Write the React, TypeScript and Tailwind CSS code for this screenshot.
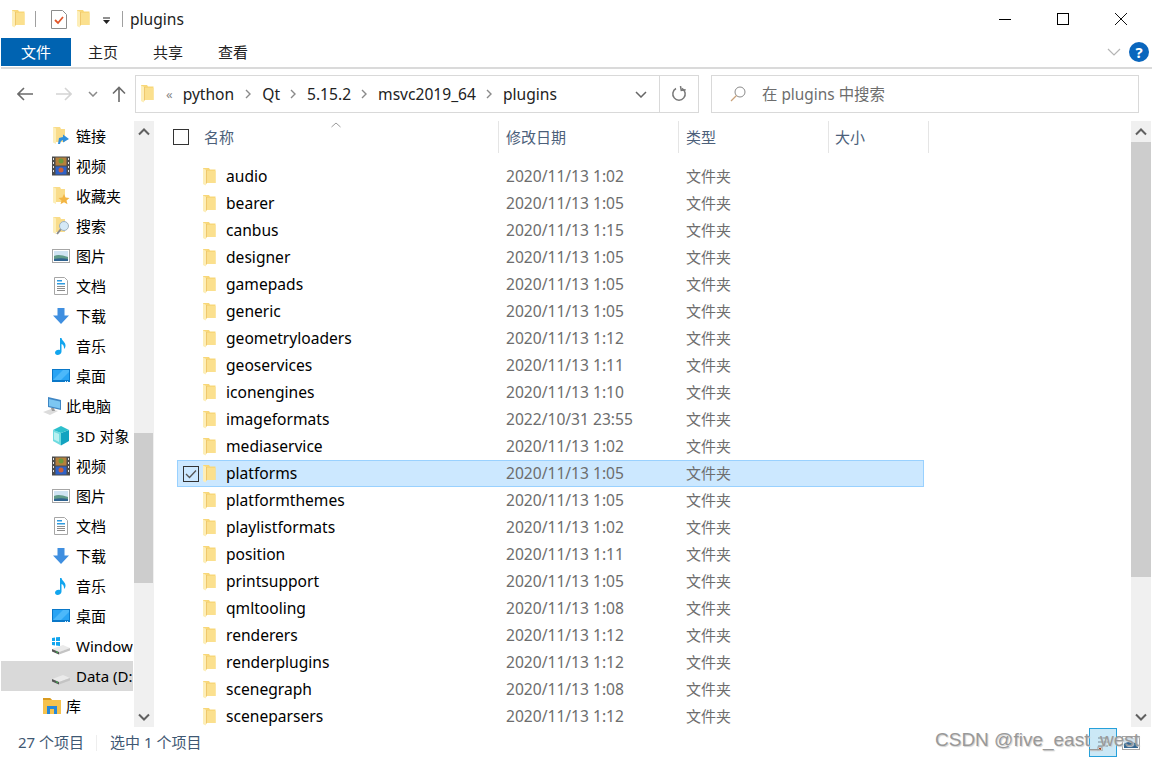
import React from "react";

const folders = [
  ["audio", "2020/11/13 1:02"],
  ["bearer", "2020/11/13 1:05"],
  ["canbus", "2020/11/13 1:15"],
  ["designer", "2020/11/13 1:05"],
  ["gamepads", "2020/11/13 1:05"],
  ["generic", "2020/11/13 1:05"],
  ["geometryloaders", "2020/11/13 1:12"],
  ["geoservices", "2020/11/13 1:11"],
  ["iconengines", "2020/11/13 1:10"],
  ["imageformats", "2022/10/31 23:55"],
  ["mediaservice", "2020/11/13 1:02"],
  ["platforms", "2020/11/13 1:05"],
  ["platformthemes", "2020/11/13 1:05"],
  ["playlistformats", "2020/11/13 1:02"],
  ["position", "2020/11/13 1:11"],
  ["printsupport", "2020/11/13 1:05"],
  ["qmltooling", "2020/11/13 1:08"],
  ["renderers", "2020/11/13 1:12"],
  ["renderplugins", "2020/11/13 1:12"],
  ["scenegraph", "2020/11/13 1:08"],
  ["sceneparsers", "2020/11/13 1:12"],
];

const FolderIcon = ({ className = "" }: { className?: string }) => (
  <svg width="13" height="18" viewBox="0 0 13 18" className={`shrink-0 ${className}`}>
    <path d="M0 0h6l1 1.500h5.500V15H0z" fill="#f8d779" />
    <path d="M4 3h8.500v12H4z" fill="#fbe08e" />
    <path d="M0 .5L3.500 2v13.500L2.500 17.500 0 16z" fill="#fdeeb8" />
    <path d="M3.500 2v13.500" stroke="#ecc262" strokeWidth="0.800" />
  </svg>
);

const SideFolder = ({ badge }: { badge: React.ReactNode }) => (
  <svg width="20" height="20" viewBox="0 0 20 20">
    <path d="M2 1h7l1 2h4v13H2z" fill="#f9dc8a" />
    <path d="M2 1l3 1.500V18l-3-1.500z" fill="#fdeeb8" />
    {badge}
  </svg>
);

const LinkIcon = () => (
  <SideFolder badge={<path d="M7 18l1-6 4-1V8.500l6 4.500-6 3.500V14l-2 1-1 3z" fill="#2f8fdc" />} />
);
const StarIcon = () => (
  <SideFolder badge={<path d="M13 8l1.600 3.600 3.900.4-3 2.500 1 3.800-3.500-2-3.500 2 1-3.800-3-2.500 3.900-.4z" fill="#f2b544" />} />
);
const SearchFolderIcon = () => (
  <SideFolder
    badge={
      <g>
        <path d="M10 13l-4 5" stroke="#8a8a8a" strokeWidth="2" />
        <circle cx="13" cy="10" r="4.500" fill="#d5e9f7" stroke="#9fb2c0" />
      </g>
    }
  />
);

const VideoIcon = () => (
  <svg width="18" height="20" viewBox="0 0 18 20">
    <rect width="18" height="19" y="0.500" fill="#4b4b4b" />
    <rect x="3.500" y="1.500" width="11" height="8" fill="#b5803c" />
    <rect x="3.500" y="10.500" width="11" height="8" fill="#2f62c8" />
    <circle cx="9" cy="5" r="2.500" fill="#6a9a3c" />
    <circle cx="9" cy="14" r="2.500" fill="#c9603c" />
    <path d="M1 2h1v2H1zM1 6h1v2H1zM1 10h1v2H1zM1 14h1v2H1zM16 2h1v2h-1zM16 6h1v2h-1zM16 10h1v2h-1zM16 14h1v2h-1z" fill="#e6e6e6" />
  </svg>
);
const PictureIcon = () => (
  <svg width="18" height="14" viewBox="0 0 18 14">
    <rect x="0.500" y="0.500" width="17" height="13" fill="#fff" stroke="#a6a6a6" />
    <rect x="2" y="2" width="14" height="10" fill="#cfe3f2" />
    <path d="M2 7c4-2 8-1 14 1v4H2z" fill="#5f9a88" />
    <path d="M2 10c5-1 9-1 14 0v2H2z" fill="#2f6390" />
  </svg>
);
const DocIcon = () => (
  <svg width="14" height="18" viewBox="0 0 14 18">
    <path d="M.5.5h10l3 3v14H.5z" fill="#fff" stroke="#a6a6a6" />
    <path d="M3 3h5v1.500H3zM3 6h8v1.500H3z" fill="#2f9be0" />
    <path d="M3 9h8v1H3zM3 11h8v1H3zM3 13h8v1H3z" fill="#8c8c8c" />
  </svg>
);
const DownloadIcon = () => (
  <svg width="18" height="18" viewBox="0 0 18 18">
    <path d="M5.500 1h7v7.500H17L9 17 1 8.500h4.500z" fill="#3f8fe0" />
  </svg>
);
const MusicIcon = () => (
  <svg width="14" height="18" viewBox="0 0 14 18">
    <path d="M6 1h1.500c.5 3 4 4 4 7.500 0 1.500-.5 2.500-1.500 3.500.3-3-1-4.500-2.500-5v7.500C7.500 16.500 5.500 18 3.500 18 2 18 1 17 1 15.800 1 14 3 12.800 4.500 12.800c.6 0 1.100.1 1.500.3z" fill="#12a5ee" />
  </svg>
);
const DesktopIcon = () => (
  <svg width="18" height="14" viewBox="0 0 18 14">
    <rect width="18" height="13" fill="#0a78c8" />
    <rect x="1" y="1" width="16" height="10" fill="#29a4f4" />
    <path d="M1 11L11 1h6v2L9 11z" fill="#4cb8fa" />
    <path d="M13 12h1v1h-1zM15 12h1v1h-1z" fill="#d8eefc" />
  </svg>
);
const PcIcon = () => (
  <svg width="20" height="20" viewBox="0 0 20 20">
    <path d="M6 1l13 3v10L6 11z" fill="#3f86c4" />
    <path d="M7 3l11 2.500v7L7 10z" fill="#7cc6f2" />
    <path d="M1 16l8-3 7 2-8 4z" fill="#dcdcdc" />
    <path d="M9 12h3l1 3-3 0z" fill="#9a9a9a" />
  </svg>
);
const CubeIcon = () => (
  <svg width="18" height="20" viewBox="0 0 18 20">
    <path d="M9 7l8-3v11l-8 4.500z" fill="#12a3c0" />
    <path d="M9 7L1 4v11l8 4.500z" fill="#6fdbe0" />
    <path d="M9 0l8 4-8 3-8-3z" fill="#2dbfcc" />
    <path d="M2 6l5 2v8l-5-2.500z" fill="#b8f0f0" />
  </svg>
);
const DriveIcon = ({ win = false }: { win?: boolean }) => (
  <svg width="20" height="18" viewBox="0 0 20 18">
    {win && <path d="M1 1l3-.5v3.500H1zM5 .3L9 0v4H5zM1 5h3v3.500L1 8zM5 5h4v4l-4-.5z" fill="#12a5ee" />}
    <path d="M1 12l11-4 7 3-11 4z" fill="#eaeaea" />
    <path d="M1 12l7 3v2.500l-7-3z" fill="#555" />
    <path d="M8 15l11-4v2.500l-11 4z" fill="#c4c4c4" />
    <path d="M5 14.300l2 .8v1l-2-.8z" fill="#3fbf4f" />
  </svg>
);
const LibraryIcon = () => (
  <svg width="18" height="16" viewBox="0 0 18 16">
    <path d="M0 0h7l2 2h9v14H0z" fill="#f6c24d" />
    <path d="M0 0h7l2 2H0z" fill="#d99a1f" />
    <path d="M4 8h10v8h-3v-5H7v5H4z" fill="#2788d8" />
  </svg>
);

const sideItems: [string, React.ReactNode, boolean?][] = [
  ["链接", <LinkIcon />],
  ["视频", <VideoIcon />],
  ["收藏夹", <StarIcon />],
  ["搜索", <SearchFolderIcon />],
  ["图片", <PictureIcon />],
  ["文档", <DocIcon />],
  ["下载", <DownloadIcon />],
  ["音乐", <MusicIcon />],
  ["桌面", <DesktopIcon />],
  ["此电脑", <PcIcon />, true],
  ["3D 对象", <CubeIcon />],
  ["视频", <VideoIcon />],
  ["图片", <PictureIcon />],
  ["文档", <DocIcon />],
  ["下载", <DownloadIcon />],
  ["音乐", <MusicIcon />],
  ["桌面", <DesktopIcon />],
  ["Window", <DriveIcon win />],
  ["Data (D:", <DriveIcon />],
  ["库", <LibraryIcon />, true],
  ["", <PcIcon />, true],
];

const Crumb = ({ label, first = false }: { label: string; first?: boolean }) => (
  <>
    <span className="pt-[2px]">{label}</span>
    <svg width="6" height="10" viewBox="0 0 6 10" className={first ? "ml-[11px] mr-[11px]" : "ml-[10px] mr-[11px]"}>
      <path d="M1 1l4 4-4 4" fill="none" stroke="#8a8a8a" strokeWidth="1.400" />
    </svg>
  </>
);

const ScrollUp = () => (
  <svg width="12" height="8" viewBox="0 0 12 8">
    <path d="M1 6.500l5-5 5 5" fill="none" stroke="#606060" strokeWidth="2" />
  </svg>
);
const ScrollDown = () => (
  <svg width="12" height="8" viewBox="0 0 12 8">
    <path d="M1 1.500l5 5 5-5" fill="none" stroke="#606060" strokeWidth="2" />
  </svg>
);

const FONT = "font-['Noto_Sans','Noto_Sans_CJK_SC',sans-serif]";

export default function App() {
  return (
    <div className={`${FONT} relative flex h-[758px] w-[1152px] flex-col overflow-hidden bg-white text-[15px] text-[#111]`}>
      {/* title bar */}
      <div className="flex h-[38px] shrink-0 items-center pl-3">
        <FolderIcon />
        <div className="ml-[10px] h-[16px] w-px bg-[#a0a0a0]" />
        <svg width="16" height="19" viewBox="0 0 16 19" className="ml-[15px]">
          <path d="M.5.5h11l4 4v14H.5z" fill="#fff" stroke="#8c8c8c" />
          <path d="M4 10l3 3 5-6" fill="none" stroke="#e2562a" strokeWidth="1.800" />
        </svg>
        <FolderIcon className="ml-[10px]" />
        <svg width="10" height="8" viewBox="0 0 10 8" className="ml-[12px] mt-[3px]">
          <path d="M1 .5h7v1H1zM1 3h7L4.500 7z" fill="#222" />
        </svg>
        <div className="ml-[10px] h-[16px] w-px bg-[#a0a0a0]" />
        <span className="ml-[7px] pt-[2px] text-[15.6px] text-[#222]">plugins</span>
        <div className="ml-auto flex items-center pr-[24px]">
          <div className="h-px w-[12px] bg-black" />
          <div className="ml-[46px] h-[12px] w-[12px] border border-black" />
          <svg width="14" height="14" viewBox="0 0 14 14" className="ml-[45px]">
            <path d="M1 1l12 12M13 1L1 13" stroke="#111" strokeWidth="1" />
          </svg>
        </div>
      </div>

      {/* ribbon */}
      <div className="ml-px flex h-[31px] shrink-0 items-start border-b-2 border-[#dadada] pr-[3px]">
        <div className="flex h-[28px] w-[70px] items-center justify-center bg-[#0063b1] text-white">文件</div>
        <span className="ml-[17px] flex h-[28px] items-center text-[#222]">主页</span>
        <span className="ml-[35px] flex h-[28px] items-center text-[#222]">共享</span>
        <span className="ml-[35px] flex h-[28px] items-center text-[#222]">查看</span>
        <div className="ml-auto flex h-[28px] items-center gap-[8px]">
          <svg width="14" height="8" viewBox="0 0 14 8">
            <path d="M1 1l6 6 6-6" fill="none" stroke="#b5b5b5" strokeWidth="1.200" />
          </svg>
          <div className="flex h-[20px] w-[20px] items-center justify-center rounded-full bg-[#0a66bd] text-[15px] font-bold text-white">?</div>
        </div>
      </div>

      {/* nav row */}
      <div className="flex h-[52px] shrink-0 items-center pb-[2px] pl-[17px]">
        <svg width="16" height="14" viewBox="0 0 16 14">
          <path d="M16 7H1.500M7 1L1 7l6 6" fill="none" stroke="#6b6b6b" strokeWidth="1.600" />
        </svg>
        <svg width="16" height="14" viewBox="0 0 16 14" className="ml-[23px]">
          <path d="M0 7h14.500M9 1l6 6-6 6" fill="none" stroke="#d4d4d4" strokeWidth="1.600" />
        </svg>
        <svg width="10" height="6" viewBox="0 0 10 6" className="ml-[16px]">
          <path d="M1 1l4 4 4-4" fill="none" stroke="#8a8a8a" strokeWidth="1.500" />
        </svg>
        <svg width="14" height="16" viewBox="0 0 14 16" className="ml-[14px]">
          <path d="M7 16V1.500M1 7.500l6-6 6 6" fill="none" stroke="#6b6b6b" strokeWidth="1.600" />
        </svg>

        <div className="ml-[9px] flex h-[38px] w-[564px] items-center border border-[#d9d9d9]">
          <FolderIcon className="ml-[5px]" />
          <span className="ml-[12px] text-[13px] leading-none text-[#888]">«</span>
          <div className="ml-[10px] flex flex-1 items-center text-[15.6px] text-[#222]">
            <Crumb label="python" first />
            <Crumb label="Qt" />
            <Crumb label="5.15.2" />
            <Crumb label="msvc2019_64" />
            <span className="pt-[2px]">plugins</span>
          </div>
          <svg width="12" height="7" viewBox="0 0 12 7" className="mr-[12px]">
            <path d="M1 1l5 5 5-5" fill="none" stroke="#666" strokeWidth="1.500" />
          </svg>
          <div className="flex h-full w-[39px] items-center justify-center border-l border-[#d9d9d9]">
            <svg width="16" height="16" viewBox="0 0 16 16">
              <path d="M11 2.500a6.200 6.200 0 1 1-6 0" fill="none" stroke="#777" strokeWidth="1.500" />
              <path d="M10 0v4.500h4.500" fill="none" stroke="#777" strokeWidth="1.500" transform="rotate(-10 10 3)" />
            </svg>
          </div>
        </div>

        <div className="ml-[12px] flex h-[38px] w-[428px] items-center border border-[#d9d9d9] text-[#6d6d6d]">
          <svg width="16" height="16" viewBox="0 0 16 16" className="ml-[18px]">
            <circle cx="10" cy="6" r="5" fill="none" stroke="#8a8a8a" />
            <path d="M6.500 9.500L1 15" stroke="#c9a27a" strokeWidth="1.300" />
          </svg>
          <span className="ml-[16px] pt-[2px] text-[15.4px]">在 plugins 中搜索</span>
        </div>
      </div>

      {/* main */}
      <div className="flex h-[606px] shrink-0 items-stretch">
        {/* sidebar */}
        <div className="h-full w-[134px] overflow-hidden pl-px pr-px">
          {sideItems.map(([label, icon, top], i) => (
            <div
              key={i}
              className={`flex h-[30px] items-center overflow-hidden whitespace-nowrap ${label === "Data (D:" ? "bg-[#d9d9d9]" : ""}`}
            >
              <div className={`flex w-[20px] shrink-0 items-center justify-center ${top ? "ml-[41px]" : "ml-[50px]"}`}>{icon}</div>
              <span className={`${top ? "ml-[4px]" : "ml-[5px]"} text-black`}>{label}</span>
            </div>
          ))}
        </div>
        {/* sidebar scrollbar */}
        <div className="flex h-full w-[20px] flex-col bg-[#f0f0f0]">
          <div className="flex h-[21px] shrink-0 items-center justify-center"><ScrollUp /></div>
          <div className="mt-[291px] h-[150px] w-[19px] shrink-0 bg-[#cdcdcd]" />
          <div className="mt-auto flex h-[21px] shrink-0 items-center justify-center"><ScrollDown /></div>
        </div>

        {/* file list */}
        <div className="relative flex h-full flex-1 flex-col pl-[7px]">
          <div className="flex h-[32px] shrink-0 items-center text-[#4c607a]">
            <div className="relative flex h-full w-[338px] items-center border-r border-[#e5e5e5] pl-[12px]">
              <div className="h-[16px] w-[16px] border border-[#333]" />
              <span className="ml-[15px]">名称</span>
              <svg width="10" height="6" viewBox="0 0 10 6" className="absolute left-[170px] top-[1px]">
                <path d="M.5 5L5 1l4.500 4" fill="none" stroke="#9a9a9a" />
              </svg>
            </div>
            <div className="flex h-full w-[180px] items-center border-r border-[#e5e5e5] pl-[7px]">修改日期</div>
            <div className="flex h-full w-[150px] items-center border-r border-[#e5e5e5] pl-[7px]">类型</div>
            <div className="flex h-full w-[100px] items-center border-r border-[#e5e5e5] pl-[6px]">大小</div>
          </div>

          <div className="mt-[10px] w-[763px] shrink-0 pl-[16px]">
            {folders.map(([name, date]) => {
              const sel = name === "platforms";
              return (
                <div
                  key={name}
                  className={`flex h-[27px] items-center border ${sel ? "border-[#99d1ff] bg-[#cce8ff]" : "border-transparent"}`}
                >
                  <div className="flex w-[48px] shrink-0 items-center pl-[5px]">
                    <div className="flex h-[16px] w-[16px] shrink-0 items-center justify-center">
                      {sel && (
                        <div className="flex h-[16px] w-[16px] items-center justify-center border border-[#333]">
                          <svg width="12" height="10" viewBox="0 0 12 10">
                            <path d="M1 5l3.500 3.500L11 1.500" fill="none" stroke="#555" strokeWidth="1.300" />
                          </svg>
                        </div>
                      )}
                    </div>
                    <FolderIcon className="ml-[4px]" />
                  </div>
                  <div className="w-[280px] text-[15.6px] text-black">{name}</div>
                  <div className="w-[180px] text-[15.6px] text-[#6d6d6d]">{date}</div>
                  <div className="text-[#6d6d6d]">文件夹</div>
                </div>
              );
            })}
          </div>
        </div>

        {/* right scrollbar */}
        <div className="mr-px flex h-full w-[20px] flex-col bg-[#f0f0f0]">
          <div className="flex h-[21px] shrink-0 items-center justify-center"><ScrollUp /></div>
          <div className="h-[435px] w-full shrink-0 bg-[#cdcdcd]" />
          <div className="mt-auto flex h-[21px] shrink-0 items-center justify-center"><ScrollDown /></div>
        </div>
      </div>

      {/* status bar */}
      <div className="flex flex-1 items-center pl-[18px] text-[#3f5873]">
        <span>27 个项目</span>
        <div className="ml-[12px] h-[16px] w-px bg-[#eeeeee]" />
        <span className="ml-[13px]">选中 1 个项目</span>
        <div className="ml-auto mr-[12px] flex items-center gap-[5px]">
          <div className="flex h-[29px] w-[28px] items-center justify-center border border-[#26a0da] bg-[#cbe8f6]">
            <svg width="12" height="16" viewBox="0 0 12 16">
              <path d="M1 3h10M1 7h10M1 11h10" stroke="#7a8a96" />
              <rect x="1" y="12" width="4" height="4" fill="#fff" stroke="#999" />
              <rect x="2" y="13" width="2" height="2" fill="#b5401c" />
            </svg>
          </div>
          <svg width="18" height="14" viewBox="0 0 18 14">
            <rect x="0.500" y="0.500" width="17" height="13" fill="#fff" stroke="#a6a6a6" />
            <rect x="2" y="2" width="14" height="10" fill="#cfe3f2" />
            <path d="M2 8c4-3 8-2 14 0v4H2z" fill="#2f6390" />
          </svg>
        </div>
      </div>

      {/* CSDN watermark */}
      <div className="absolute left-[935px] top-[726px] font-['Liberation_Sans',sans-serif] text-[19px] text-[#999999] [text-shadow:1px_1px_1px_#cfcfcf]">
        CSDN @five_east_west
      </div>
    </div>
  );
}
